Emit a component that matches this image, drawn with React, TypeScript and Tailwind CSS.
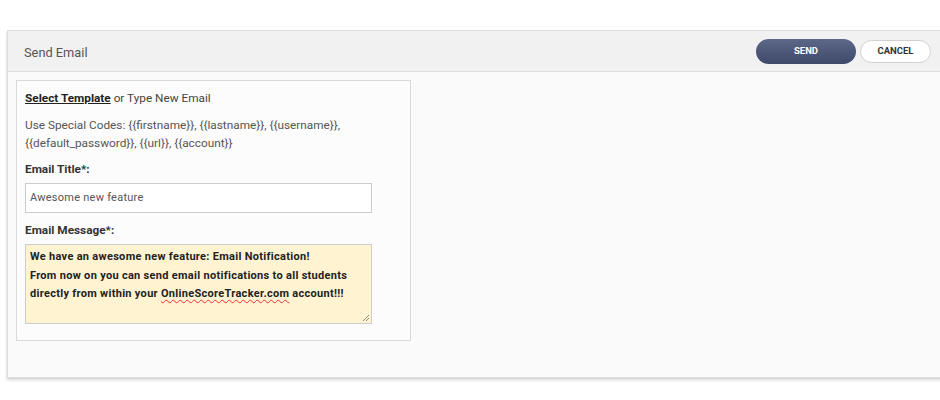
import React from "react";

export default function App() {
  return (
    <div className="w-[940px] h-[400px] bg-white overflow-hidden pt-[30px]" style={{ fontFamily: "Roboto, 'Liberation Sans', sans-serif" }}>
      <div className="ml-[7px] mr-[-12px] h-[348px] border border-[#dcdcdc] bg-[#fafafa] shadow-[0_2px_3px_rgba(0,0,0,0.18)] flex flex-col">
        <div className="h-[41px] shrink-0 bg-[#f1f1f1] border-b border-[#dedede] flex items-center justify-between pl-[16px] pr-[20px]">
          <div className="mt-[3px] text-[12.8px] text-[#555555]">Send Email</div>
          <div className="flex items-center gap-[4px]">
            <button className="w-[100px] h-[25px] rounded-full bg-gradient-to-b from-[#5d6888] to-[#3f4a6b] text-white text-[9.5px] font-bold">SEND</button>
            <button className="w-[71px] h-[23px] rounded-full bg-white border border-[#d0d0d0] text-[#333] text-[9.5px] font-bold">CANCEL</button>
          </div>
        </div>
        <div className="pt-[8px] pl-[8px]">
          <div className="w-[395px] h-[261px] border border-[#d9d9d9] bg-[#fcfcfc] pl-[8px] pt-[8px]">
            <div className="text-[11.8px] leading-[18px] text-[#444]">
              <span className="font-bold underline text-[#222]">Select Template</span> or Type New Email
            </div>
            <div className="mt-[9px] text-[11.8px] leading-[18px] text-[#555]">
              Use Special Codes: {"{{firstname}}"}, {"{{lastname}}"}, {"{{username}}"},<br />
              {"{{default_password}}"}, {"{{url}}"}, {"{{account}}"}
            </div>
            <div className="mt-[8px] text-[11.8px] leading-[18px] font-bold text-[#333]">Email Title*:</div>
            <div className="mt-[5px] w-[347px] h-[30px] border border-[#cccccc] bg-white flex items-center pl-[4px] text-[11px] tracking-[0.25px] text-[#555]">
              Awesome new feature
            </div>
            <div className="mt-[8px] text-[11.8px] leading-[18px] font-bold text-[#333]">Email Message*:</div>
            <div className="relative mt-[5px] w-[347px] h-[80px] border border-[#cccccc] bg-[#fff3d2] pl-[4px] pt-[3px] text-[11px] leading-[18.5px] tracking-[0.3px] font-bold text-[#222] whitespace-nowrap">
              We have an awesome new feature: Email Notification!<br />
              From now on you can send email notifications to all students<br />
              directly from within your{" "}
              <span className="underline decoration-wavy decoration-red-500 decoration-[1px] underline-offset-[2px]">OnlineScoreTracker.com</span>{" "}
              account!!!
              <svg className="absolute right-[1px] bottom-[1px]" width="8" height="8" viewBox="0 0 8 8">
                <path d="M7 1 L1 7 M7 4 L4 7" stroke="#888" strokeWidth="1" />
              </svg>
            </div>
          </div>
        </div>
      </div>
    </div>
  );
}
